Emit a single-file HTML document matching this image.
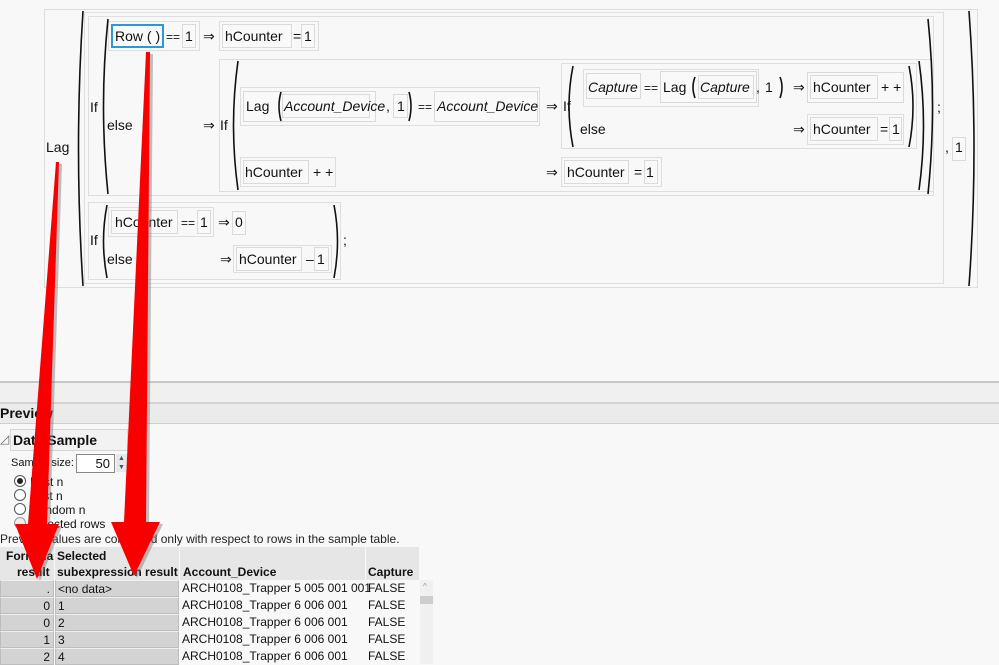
<!DOCTYPE html>
<html><head><meta charset="utf-8"><style>
*{margin:0;padding:0;box-sizing:border-box}
body{width:999px;height:664px;overflow:hidden;background:#f8f8f8;font-family:"Liberation Sans",sans-serif;color:#111;position:relative}
.b{position:absolute;border:1px solid #dedede}
.k{position:absolute;border:1px solid #dadada;background:#f9f9f9}
.t{position:absolute;font-size:14px;line-height:16px;white-space:nowrap}
.i{font-style:italic}
.s{position:absolute;font-size:12px;line-height:14px;white-space:nowrap}
.c{position:absolute;height:17px;font-size:12px;line-height:16px;white-space:nowrap}
.g{background:#d3d3d3;border:1px solid #bdbdbd;border-top:1px solid #efefef}
</style></head><body>

<div class="b" style="left:44px;top:9px;width:934px;height:279px"></div>
<div class="b" style="left:84px;top:12px;width:860px;height:272px"></div>
<div class="b" style="left:88px;top:16px;width:846px;height:180px"></div>
<div class="b" style="left:108px;top:21px;width:92px;height:30px"></div>
<div class="k" style="left:111px;top:24px;width:53px;height:24px;border:2px solid #2a9ad6"></div>
<div class="k" style="left:182px;top:24px;width:14px;height:24px"></div>
<div class="b" style="left:219px;top:21px;width:100px;height:30px"></div>
<div class="k" style="left:222px;top:24px;width:70px;height:24px"></div>
<div class="k" style="left:301px;top:24px;width:14px;height:24px"></div>
<div class="b" style="left:219px;top:59px;width:715px;height:133px"></div>
<div class="b" style="left:240px;top:87px;width:300px;height:39px"></div>
<div class="k" style="left:243px;top:91px;width:133px;height:31px"></div>
<div class="k" style="left:282px;top:94px;width:88px;height:24px"></div>
<div class="k" style="left:393px;top:94px;width:15px;height:24px"></div>
<div class="k" style="left:434px;top:91px;width:104px;height:31px"></div>
<div class="b" style="left:561px;top:63px;width:356px;height:86px"></div>
<div class="b" style="left:583px;top:69px;width:176px;height:38px"></div>
<div class="k" style="left:586px;top:73px;width:55px;height:26px"></div>
<div class="k" style="left:660px;top:71px;width:97px;height:32px"></div>
<div class="k" style="left:698px;top:75px;width:56px;height:24px"></div>
<div class="k" style="left:807px;top:72px;width:97px;height:31px"></div>
<div class="k" style="left:810px;top:75px;width:68px;height:24px"></div>
<div class="b" style="left:807px;top:114px;width:97px;height:31px"></div>
<div class="k" style="left:810px;top:117px;width:68px;height:24px"></div>
<div class="k" style="left:889px;top:117px;width:13px;height:24px"></div>
<div class="b" style="left:240px;top:157px;width:96px;height:30px"></div>
<div class="k" style="left:243px;top:160px;width:66px;height:24px"></div>
<div class="b" style="left:561px;top:157px;width:101px;height:30px"></div>
<div class="k" style="left:564px;top:160px;width:65px;height:24px"></div>
<div class="k" style="left:644px;top:160px;width:14px;height:24px"></div>
<div class="b" style="left:88px;top:202px;width:253px;height:78px"></div>
<div class="b" style="left:108px;top:207px;width:106px;height:30px"></div>
<div class="k" style="left:111px;top:210px;width:67px;height:24px"></div>
<div class="k" style="left:197px;top:210px;width:14px;height:24px"></div>
<div class="k" style="left:232px;top:211px;width:14px;height:24px"></div>
<div class="b" style="left:233px;top:245px;width:99px;height:28px"></div>
<div class="k" style="left:236px;top:247px;width:66px;height:24px"></div>
<div class="k" style="left:314px;top:247px;width:15px;height:24px"></div>
<div class="k" style="left:952px;top:137px;width:14px;height:24px"></div>

<div class="t" style="left:46px;top:139px">Lag</div>
<div class="t" style="left:90px;top:99px">If</div>
<div class="t" style="left:115px;top:28px">Row ( )</div>
<div class="t" style="left:166px;top:29px;font-size:12px">==</div>
<div class="t" style="left:185px;top:28px">1</div>
<div class="t" style="left:203px;top:28px">⇒</div>
<div class="t" style="left:225px;top:28px">hCounter</div>
<div class="t" style="left:293px;top:28px">=</div>
<div class="t" style="left:304px;top:28px">1</div>
<div class="t" style="left:107px;top:117px">else</div>
<div class="t" style="left:203px;top:117px">⇒</div>
<div class="t" style="left:220px;top:117px">If</div>
<div class="t" style="left:246px;top:98px">Lag</div>
<div class="t i" style="left:284px;top:98px">Account_Device</div>
<div class="t" style="left:386px;top:98px">,</div>
<div class="t" style="left:397px;top:98px">1</div>
<div class="t" style="left:418px;top:99px;font-size:12px">==</div>
<div class="t i" style="left:437px;top:98px">Account_Device</div>
<div class="t" style="left:546px;top:98px">⇒</div>
<div class="t" style="left:563px;top:98px">If</div>
<div class="t i" style="left:588px;top:79px">Capture</div>
<div class="t" style="left:644px;top:80px;font-size:12px">==</div>
<div class="t" style="left:663px;top:79px">Lag</div>
<div class="t i" style="left:700px;top:79px">Capture</div>
<div class="t" style="left:756px;top:79px">,</div>
<div class="t" style="left:765px;top:79px">1</div>
<div class="t" style="left:793px;top:79px">⇒</div>
<div class="t" style="left:813px;top:79px">hCounter</div>
<div class="t" style="left:881px;top:79px">+ +</div>
<div class="t" style="left:580px;top:121px">else</div>
<div class="t" style="left:793px;top:121px">⇒</div>
<div class="t" style="left:813px;top:121px">hCounter</div>
<div class="t" style="left:880px;top:121px">=</div>
<div class="t" style="left:892px;top:121px">1</div>
<div class="t" style="left:245px;top:164px">hCounter</div>
<div class="t" style="left:313px;top:164px">+ +</div>
<div class="t" style="left:546px;top:164px">⇒</div>
<div class="t" style="left:567px;top:164px">hCounter</div>
<div class="t" style="left:634px;top:164px">=</div>
<div class="t" style="left:646px;top:164px">1</div>
<div class="t" style="left:937px;top:99px">;</div>
<div class="t" style="left:945px;top:139px">,</div>
<div class="t" style="left:955px;top:139px">1</div>
<div class="t" style="left:90px;top:232px">If</div>
<div class="t" style="left:115px;top:214px">hCounter</div>
<div class="t" style="left:181px;top:215px;font-size:12px">==</div>
<div class="t" style="left:200px;top:214px">1</div>
<div class="t" style="left:218px;top:214px">⇒</div>
<div class="t" style="left:235px;top:214px">0</div>
<div class="t" style="left:107px;top:251px">else</div>
<div class="t" style="left:220px;top:251px">⇒</div>
<div class="t" style="left:239px;top:251px">hCounter</div>
<div class="t" style="left:306px;top:251px">–</div>
<div class="t" style="left:317px;top:251px">1</div>
<div class="t" style="left:343px;top:232px">;</div>

<svg style="position:absolute;left:0;top:0" width="999" height="300" fill="none" stroke="#111" stroke-width="1.6">
<path d="M83 11 Q74 148 83 286"/>
<path d="M969 11 Q979 148 969 286"/>
<path d="M108 19 Q99 106 108 194"/>
<path d="M928 19 Q937 106 928 194"/>
<path d="M238 61 Q229 125 238 190"/>
<path d="M919 61 Q928 125 919 190"/>
<path d="M573 66 Q565 106 573 147"/>
<path d="M909 66 Q917 106 909 147"/>
<path d="M281 92 Q277 106 281 121"/>
<path d="M409 92 Q413 106 409 121"/>
<path d="M695 77 Q691 87 695 98"/>
<path d="M780 77 Q784 87 780 98"/>
<path d="M107 205 Q100 241 107 278"/>
<path d="M334 205 Q341 241 334 278"/>
</svg>

<div style="position:absolute;left:0;top:381px;width:999px;height:2px;background:#c8c8c4"></div>
<div style="position:absolute;left:0;top:383px;width:999px;height:19px;background:#f0f0f0"></div>
<div style="position:absolute;left:0;top:402px;width:999px;height:2px;background:#d4d4d4"></div>
<div style="position:absolute;left:0;top:404px;width:999px;height:19px;background:#ebebeb"></div>
<div style="position:absolute;left:0;top:423px;width:999px;height:1px;background:#cfcfcf"></div>
<div class="t" style="left:0;top:405px;font-weight:bold">Preview</div>

<div style="position:absolute;left:0;top:432px;font-size:12px;color:#666">◿</div>
<div style="position:absolute;left:10px;top:429px;width:118px;height:22px;border:1px solid #d4d4d4;background:#f2f2f2"></div>
<div class="t" style="left:13px;top:432px;font-weight:bold">Data Sample</div>
<div class="s" style="left:11px;top:456px;font-size:11px">Sample size:</div>
<div style="position:absolute;left:76px;top:454px;width:39px;height:19px;border:1px solid #888;background:#fff;font-size:13px;text-align:right;padding-right:4px;line-height:17px">50</div>
<div style="position:absolute;left:116px;top:454px;width:11px;height:18px;background:#e8e8e8;font-size:7px;line-height:9px;text-align:center;color:#357">▲<br>▼</div>
<div style="position:absolute;left:14px;top:475px;width:12px;height:12px;border:1px solid #555;border-radius:50%;background:#fff"><div style="width:6px;height:6px;margin:2px;border-radius:50%;background:#222"></div></div>
<div style="position:absolute;left:14px;top:489px;width:12px;height:12px;border:1px solid #555;border-radius:50%;background:#fff"></div>
<div style="position:absolute;left:14px;top:503px;width:12px;height:12px;border:1px solid #555;border-radius:50%;background:#fff"></div>
<div style="position:absolute;left:14px;top:517px;width:12px;height:12px;border:1px solid #999;border-radius:50%;background:#eee"></div>
<div class="s" style="left:30px;top:475px">First n</div>
<div class="s" style="left:30px;top:489px">Last n</div>
<div class="s" style="left:30px;top:503px">Random n</div>
<div class="s" style="left:30px;top:517px">Selected rows</div>
<div class="s" style="left:0;top:532px;color:#222">Preview values are computed only with respect to rows in the sample table.</div>

<div style="position:absolute;left:0;top:547px;width:419px;height:33px;background:#e6e6e6"></div>
<div style="position:absolute;left:54px;top:547px;width:1px;height:33px;background:#f8f8f8"></div>
<div style="position:absolute;left:179px;top:547px;width:1px;height:33px;background:#f8f8f8"></div>
<div style="position:absolute;left:365px;top:547px;width:1px;height:33px;background:#f8f8f8"></div>
<div class="s" style="left:6px;top:549px;font-weight:bold">Formula</div>
<div class="s" style="left:17px;top:565px;font-weight:bold">result</div>
<div class="s" style="left:57px;top:549px;font-weight:bold">Selected</div>
<div class="s" style="left:57px;top:565px;font-weight:bold">subexpression result</div>
<div class="s" style="left:183px;top:565px;font-weight:bold">Account_Device</div>
<div class="s" style="left:368px;top:565px;font-weight:bold">Capture</div>

<div class="c g" style="left:0;top:580px;width:54px;text-align:right;padding-right:3px">.</div>
<div class="c g" style="left:55px;top:580px;width:124px;padding-left:2px">&lt;no data&gt;</div>
<div class="c" style="left:182px;top:580px">ARCH0108_Trapper 5 005 001 001</div>
<div class="c" style="left:368px;top:580px">FALSE</div>
<div class="c g" style="left:0;top:597px;width:54px;text-align:right;padding-right:3px">0</div>
<div class="c g" style="left:55px;top:597px;width:124px;padding-left:2px">1</div>
<div class="c" style="left:182px;top:597px">ARCH0108_Trapper 6 006 001</div>
<div class="c" style="left:368px;top:597px">FALSE</div>
<div class="c g" style="left:0;top:614px;width:54px;text-align:right;padding-right:3px">0</div>
<div class="c g" style="left:55px;top:614px;width:124px;padding-left:2px">2</div>
<div class="c" style="left:182px;top:614px">ARCH0108_Trapper 6 006 001</div>
<div class="c" style="left:368px;top:614px">FALSE</div>
<div class="c g" style="left:0;top:631px;width:54px;text-align:right;padding-right:3px">1</div>
<div class="c g" style="left:55px;top:631px;width:124px;padding-left:2px">3</div>
<div class="c" style="left:182px;top:631px">ARCH0108_Trapper 6 006 001</div>
<div class="c" style="left:368px;top:631px">FALSE</div>
<div class="c g" style="left:0;top:648px;width:54px;text-align:right;padding-right:3px">2</div>
<div class="c g" style="left:55px;top:648px;width:124px;padding-left:2px">4</div>
<div class="c" style="left:182px;top:648px">ARCH0108_Trapper 6 006 001</div>
<div class="c" style="left:368px;top:648px">FALSE</div>
<div style="position:absolute;left:420px;top:580px;width:13px;height:84px;background:#f0f0f0"></div>
<div style="position:absolute;left:420px;top:596px;width:13px;height:8px;background:#cdcdcd"></div>
<div style="position:absolute;left:423px;top:582px;font-size:8px;color:#999">^</div>

<svg style="position:absolute;left:0;top:0" width="999" height="664">
<g fill="#777" opacity="0.45" transform="translate(3,2)">
<polygon points="56,162 59,162 47,524 59,524 37,579 15,524 28,524"/>
<polygon points="146,52 150,52 146,522 160,522 134,576 111,522 124,522"/>
</g>
<g fill="#f80000">
<polygon points="56,162 59,162 47,524 59,524 37,579 15,524 28,524"/>
<polygon points="146,52 150,52 146,522 160,522 134,576 111,522 124,522"/>
</g>
</svg>
</body></html>
